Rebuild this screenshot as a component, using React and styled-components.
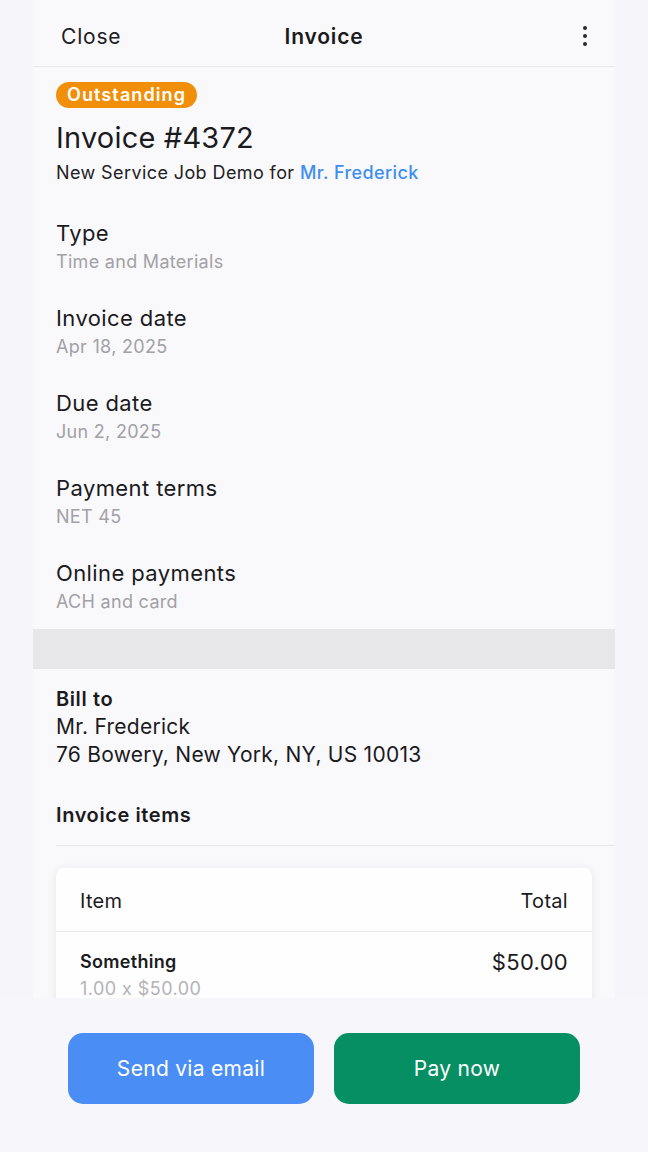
import React from "react";
import styled, { createGlobalStyle } from "styled-components";

const GlobalStyle = createGlobalStyle`
  html, body {
    margin: 0;
    padding: 0;
    background: #f6f5f9;
    font-family: Inter, "Liberation Sans", sans-serif;
    color: #1b1b1d;
  }
  * { box-sizing: border-box; }
`;

const Screen = styled.div`
  height: 1152px;
  display: flex;
  flex-direction: column;
  background: #f6f5f9;
`;

const Scroll = styled.div`
  flex: 1;
  overflow: hidden;
`;

const Column = styled.div`
  width: 582px;
  margin: 0 auto;
  background: #f9f8fb;
  min-height: 100%;
`;

const TopBar = styled.div`
  height: 67px;
  display: grid;
  grid-template-columns: 1fr auto 1fr;
  align-items: center;
  padding: 6px 28px 0;
  border-bottom: 1px solid #e9e8ec;
`;

const Close = styled.span`
  font-size: 21px;
  letter-spacing: 0.8px;
  color: #202022;
`;

const Title = styled.span`
  font-size: 21px;
  font-weight: 600;
  letter-spacing: 0.8px;
`;

const Kebab = styled.span`
  justify-self: end;
  display: flex;
  flex-direction: column;
  gap: 4px;
  i {
    width: 4px;
    height: 4px;
    border-radius: 50%;
    background: #2a2a2c;
  }
`;

const Section = styled.div`
  padding: ${p => p.$pad || "15px 23px 0"};
`;

const Badge = styled.span`
  display: inline-block;
  background: #f18f0b;
  color: #fff;
  font-size: 18px;
  font-weight: 600;
  line-height: 26px;
  padding: 0 11px;
  border-radius: 13px;
  letter-spacing: 1.1px;
`;

const InvoiceNo = styled.h1`
  margin: 12px 0 0;
  font-size: 29px;
  font-weight: 400;
  line-height: 36px;
  letter-spacing: 0.2px;
`;

const Sub = styled.div`
  font-size: 18px;
  line-height: 24px;
  letter-spacing: 0.4px;
  margin-top: 5px;
  color: #222;
  a {
    color: #3f8ff0;
    font-weight: 500;
    text-decoration: none;
  }
`;

const Fields = styled.div`
  margin-top: 33px;
  display: flex;
  flex-direction: column;
  gap: 27px;
  padding-bottom: 13px;
`;

const Field = styled.div`
  display: flex;
  flex-direction: column;
`;

const Label = styled.span`
  font-size: 22px;
  line-height: 30px;
  letter-spacing: 0.4px;
`;

const Value = styled.span`
  font-size: 18px;
  line-height: 28px;
  letter-spacing: 0.3px;
  color: #a2a1a6;
`;

const Band = styled.div`
  height: 40px;
  background: #e7e6e9;
`;

const Heading = styled.div`
  font-size: 20px;
  font-weight: 600;
  line-height: 28px;
  letter-spacing: 0.6px;
`;

const Line = styled.div`
  font-size: 21px;
  line-height: 28px;
  letter-spacing: 0.25px;
`;

const ItemsHead = styled.div`
  margin-top: 32px;
  padding-bottom: 16px;
  border-bottom: 1px solid #e6e5e9;
`;

const Card = styled.div`
  margin: 22px 23px 0 23px;
  background: #fefeff;
  border-radius: 8px;
  box-shadow: 0 1px 10px rgba(0, 0, 0, 0.08);
`;

const Row = styled.div`
  display: flex;
  justify-content: space-between;
  align-items: ${p => (p.$head ? "center" : "flex-start")};
  padding: ${p => (p.$head ? "2px 24px 0" : "16px 24px 20px")};
  height: ${p => (p.$head ? "64px" : "auto")};
  border-bottom: ${p => (p.$head ? "1px solid #e8e7eb" : "none")};
`;

const Cell = styled.span`
  font-size: ${p => p.$size || "20px"};
  font-weight: ${p => p.$weight || 400};
  line-height: 28px;
  letter-spacing: 0.3px;
`;

const ItemName = styled.div`
  display: flex;
  flex-direction: column;
`;

const Qty = styled.span`
  font-size: 18px;
  line-height: 26px;
  letter-spacing: 0.45px;
  color: #b4b3b8;
`;

const Footer = styled.div`
  height: 154px;
  flex: none;
  display: grid;
  grid-template-columns: 1fr 1fr;
  gap: 20px;
  padding: 35px 68px 48px;
  background: #f7f6fa;
`;

const Button = styled.button`
  border: none;
  border-radius: 15px;
  background: ${p => p.$bg};
  color: #fff;
  font-family: inherit;
  font-size: 21px;
  font-weight: 400;
  letter-spacing: 0.3px;
`;

const fields = [
  ["Type", "Time and Materials"],
  ["Invoice date", "Apr 18, 2025"],
  ["Due date", "Jun 2, 2025"],
  ["Payment terms", "NET 45"],
  ["Online payments", "ACH and card"],
];

export default function App() {
  return (
    <Screen>
      <GlobalStyle />
      <Scroll>
        <Column>
          <TopBar>
            <Close>Close</Close>
            <Title>Invoice</Title>
            <Kebab><i /><i /><i /></Kebab>
          </TopBar>
          <Section>
            <Badge>Outstanding</Badge>
            <InvoiceNo>Invoice #4372</InvoiceNo>
            <Sub>New Service Job Demo for <a href="#">Mr. Frederick</a></Sub>
            <Fields>
              {fields.map(([l, v]) => (
                <Field key={l}>
                  <Label>{l}</Label>
                  <Value>{v}</Value>
                </Field>
              ))}
            </Fields>
          </Section>
          <Band />
          <Section $pad="16px 0 0 23px">
            <Heading>Bill to</Heading>
            <Line>Mr. Frederick</Line>
            <Line>76 Bowery, New York, NY, US 10013</Line>
            <ItemsHead>
              <Heading>Invoice items</Heading>
            </ItemsHead>
          </Section>
          <Card>
            <Row $head>
              <Cell>Item</Cell>
              <Cell>Total</Cell>
            </Row>
            <Row>
              <ItemName>
                <Cell $size="18px" $weight={600}>Something</Cell>
                <Qty>1.00 x $50.00</Qty>
              </ItemName>
              <Cell $size="22px">$50.00</Cell>
            </Row>
          </Card>
        </Column>
      </Scroll>
      <Footer>
        <Button $bg="#4a8ef5">Send via email</Button>
        <Button $bg="#058f63">Pay now</Button>
      </Footer>
    </Screen>
  );
}
